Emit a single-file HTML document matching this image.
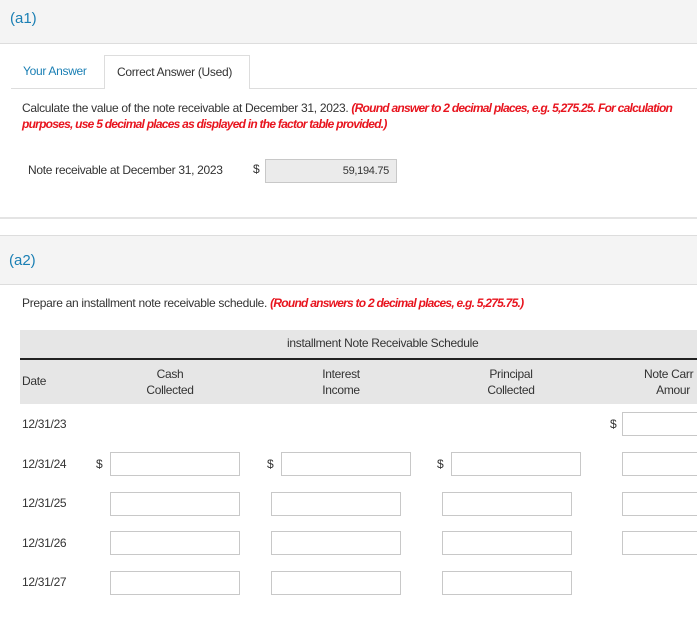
<!DOCTYPE html>
<html><head><meta charset="utf-8"><style>
*{box-sizing:border-box;margin:0;padding:0}
body{width:697px;height:619px;background:#fff;font-family:"Liberation Sans",sans-serif;font-size:12px;color:#333;position:relative;overflow:hidden;letter-spacing:-0.3px}
.a{position:absolute;white-space:nowrap}
.band{position:absolute;left:0;width:697px;background:#f4f4f4;border-bottom:1px solid #ddd}
.lbl{color:#1a7fb4;font-size:15px;letter-spacing:0}
.red{color:#e8141e;font-style:italic;font-weight:bold;letter-spacing:-0.75px}
.in{position:absolute;height:24px;border:1px solid #c8c8c8;background:#fff}
.hd{position:absolute;text-align:center;line-height:16px;color:#333}
</style></head><body>
<div class="band" style="top:0;height:44px"></div>
<div class="a lbl" style="left:10px;top:10px">(a1)</div>
<div class="a" style="left:23px;top:64px;color:#1a7fb4">Your Answer</div>
<div class="a" style="left:104px;top:55px;width:146px;height:34px;border:1px solid #ddd;border-bottom:none;background:#fff;padding:9px 0 0 12px;z-index:2">Correct Answer (Used)</div>
<div class="a" style="left:11px;top:88px;width:686px;height:1px;background:#ddd"></div>
<div class="a" style="left:22px;top:101px">Calculate the value of the note receivable at December 31, 2023. <span class="red">(Round answer to 2 decimal places, e.g. 5,275.25. For calculation</span></div>
<div class="a red" style="left:22px;top:117px">purposes, use 5 decimal places as displayed in the factor table provided.)</div>
<div class="a" style="left:28px;top:163px">Note receivable at December 31, 2023</div>
<div class="a" style="left:253px;top:162px">$</div>
<div class="in" style="left:265px;top:159px;width:132px;background:#ebebeb;text-align:right;padding:5px 7px 0 0;font-size:11px">59,194.75</div>
<div class="a" style="left:0;top:217px;width:697px;height:2px;background:#e4e4e4"></div>
<div class="band" style="top:235px;height:50px;border-top:1px solid #ddd"></div>
<div class="a lbl" style="left:9px;top:252px">(a2)</div>
<div class="a" style="left:22px;top:296px">Prepare an installment note receivable schedule. <span class="red">(Round answers to 2 decimal places, e.g. 5,275.75.)</span></div>
<div class="a" style="left:20px;top:330px;width:677px;height:74px;background:#e6e6e6"></div>
<div class="a" style="left:20px;top:358px;width:677px;height:2px;background:#222"></div>
<div class="a" style="left:287px;top:336px">installment Note Receivable Schedule</div>
<div class="a" style="left:22px;top:374px">Date</div>
<div class="hd" style="left:120px;top:366px;width:100px">Cash<br>Collected</div>
<div class="hd" style="left:291px;top:366px;width:100px">Interest<br>Income</div>
<div class="hd" style="left:461px;top:366px;width:100px">Principal<br>Collected</div>
<div class="hd" style="left:644px;top:366px;width:80px;text-align:left">Note Carr<br>&nbsp;&nbsp;&nbsp;&nbsp;Amour</div>
<div class="a" style="left:22px;top:417px">12/31/23</div>
<div class="a" style="left:610px;top:417px">$</div>
<div class="in" style="left:622px;top:412px;width:80px"></div>
<div class="a" style="left:22px;top:457px">12/31/24</div>
<div class="a" style="left:96px;top:457px">$</div><div class="in" style="left:110px;top:452px;width:130px"></div>
<div class="a" style="left:267px;top:457px">$</div><div class="in" style="left:281px;top:452px;width:130px"></div>
<div class="a" style="left:437px;top:457px">$</div><div class="in" style="left:451px;top:452px;width:130px"></div>
<div class="in" style="left:622px;top:452px;width:80px"></div>
<div class="a" style="left:22px;top:496px">12/31/25</div>
<div class="in" style="left:110px;top:492px;width:130px"></div><div class="in" style="left:271px;top:492px;width:130px"></div><div class="in" style="left:442px;top:492px;width:130px"></div><div class="in" style="left:622px;top:492px;width:80px"></div>
<div class="a" style="left:22px;top:536px">12/31/26</div>
<div class="in" style="left:110px;top:531px;width:130px"></div><div class="in" style="left:271px;top:531px;width:130px"></div><div class="in" style="left:442px;top:531px;width:130px"></div><div class="in" style="left:622px;top:531px;width:80px"></div>
<div class="a" style="left:22px;top:575px">12/31/27</div>
<div class="in" style="left:110px;top:571px;width:130px"></div><div class="in" style="left:271px;top:571px;width:130px"></div><div class="in" style="left:442px;top:571px;width:130px"></div>
</body></html>
